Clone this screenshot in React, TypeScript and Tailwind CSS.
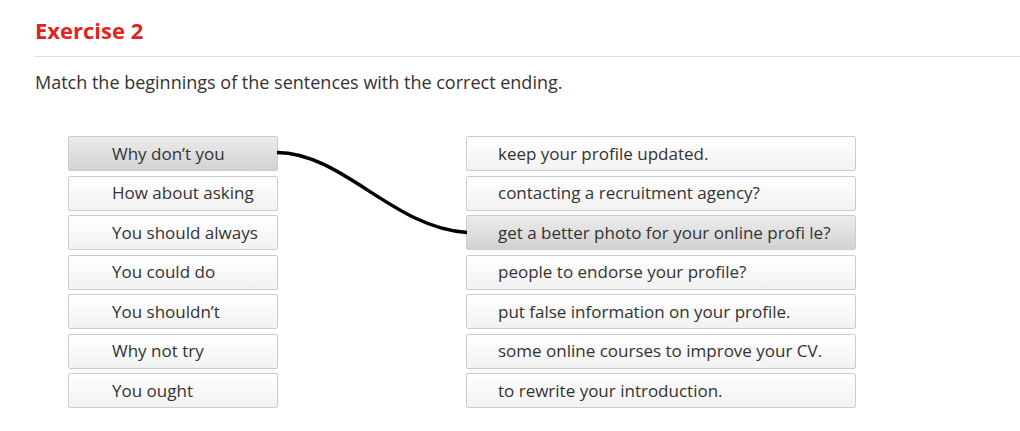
import React from "react";

const starts = [
  "Why don\u2019t you",
  "How about asking",
  "You should always",
  "You could do",
  "You shouldn\u2019t",
  "Why not try",
  "You ought",
];

const endings = [
  "keep your profile updated.",
  "contacting a recruitment agency?",
  "get a better photo for your online profi le?",
  "people to endorse your profile?",
  "put false information on your profile.",
  "some online courses to improve your CV.",
  "to rewrite your introduction.",
];

function Box({ text, active, wide }: { text: string; active?: boolean; wide?: boolean }) {
  return (
    <div
      className={
        "h-[35px] flex items-center rounded-[2px] border border-[#cccccc] text-[17px] text-[#333333] " +
        (wide ? "w-[390px] pl-[31px] " : "w-[210px] pl-[43px] ") +
        (active
          ? "bg-gradient-to-b from-[#ececec] to-[#d2d2d2]"
          : "bg-gradient-to-b from-white to-[#f2f2f2]")
      }
    >
      {text}
    </div>
  );
}

export default function App() {
  return (
    <div className="w-[1020px] h-[431px] bg-white font-['Open_Sans',sans-serif] overflow-hidden">
      <div className="pl-[34px] pt-[14px]">
        <h2 className="text-[22px] font-bold text-[#e02424] leading-[32px] pl-[1px]">Exercise 2</h2>
        <div className="mt-[10px] h-px bg-[#e0e0e0]" />
        <p className="mt-[11px] text-[18px] text-[#333333] leading-[28px] pl-[1px]">
          Match the beginnings of the sentences with the correct ending.
        </p>
      </div>

      <div className="relative mt-[40px] ml-[68px] flex gap-[188px]">
        <div className="flex flex-col gap-[4.5px]">
          {starts.map((s, i) => (
            <Box key={s} text={s} active={i === 0} />
          ))}
        </div>
        <div className="flex flex-col gap-[4.5px]">
          {endings.map((s, i) => (
            <Box key={s} text={s} active={i === 2} wide />
          ))}
        </div>

        {/* connection line */}
        <svg className="absolute left-0 top-0 pointer-events-none" width="400" height="120">
          <path
            d="M209 16.5 C 275 17, 325 92, 399 96.5"
            fill="none"
            stroke="#000"
            strokeWidth="3.5"
          />
        </svg>
      </div>
    </div>
  );
}
